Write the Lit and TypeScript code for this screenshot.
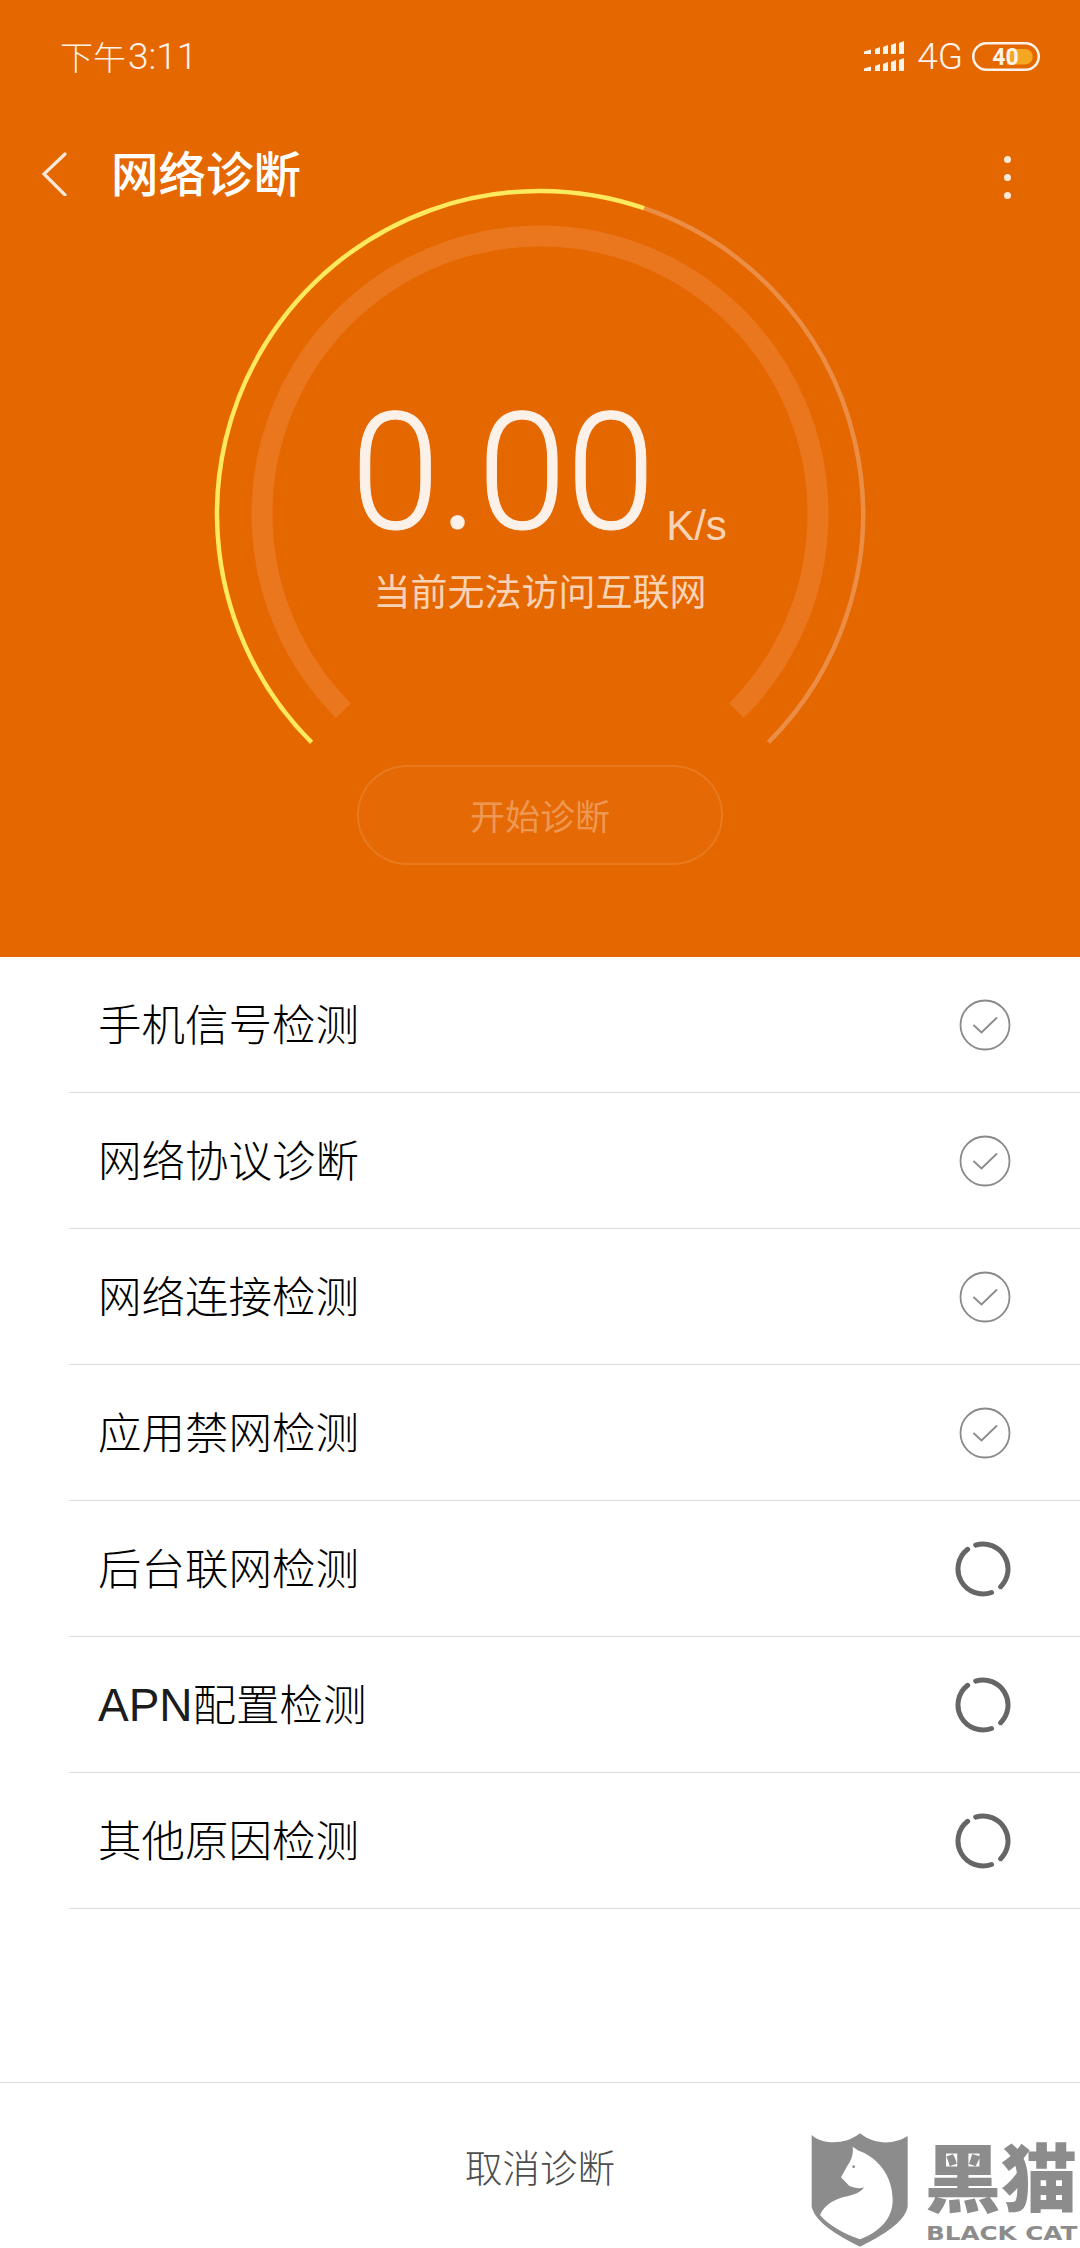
import { LitElement, html, css, svg } from "lit";
import { customElement } from "lit/decorators.js";

type Status = "done" | "busy";
const rows: { latin?: string; label: string; status: Status }[] = [
  { label: "手机信号检测", status: "done" },
  { label: "网络协议诊断", status: "done" },
  { label: "网络连接检测", status: "done" },
  { label: "应用禁网检测", status: "done" },
  { label: "后台联网检测", status: "busy" },
  { latin: "APN", label: "配置检测", status: "busy" },
  { label: "其他原因检测", status: "busy" },
];

// angle in degrees, clockwise from 12 o'clock
function polar(cx: number, cy: number, r: number, deg: number) {
  const a = (deg * Math.PI) / 180;
  return `${(cx + r * Math.sin(a)).toFixed(2)} ${(cy - r * Math.cos(a)).toFixed(2)}`;
}

function arc(cx: number, cy: number, r: number, from: number, to: number) {
  const large = to - from > 180 ? 1 : 0;
  return `M${polar(cx, cy, r, from)} A${r} ${r} 0 ${large} 1 ${polar(cx, cy, r, to)}`;
}

const signalBars = [0, 1, 2, 3, 4].map((i) => {
  const x = i * 8 + (i === 0 ? 0 : 3);
  const w = i === 0 ? 7 : 5;
  const rise = [4.5, 7, 9, 11, 13][i];
  return { x, w, rise };
});

@customElement("app-root")
export class AppRoot extends LitElement {
  static styles = css`
    :host {
      display: block;
      width: 1080px;
      height: 2248px;
      background: #fff;
      font-family: "Noto Sans CJK SC", "Noto Sans", sans-serif;
    }
    .page {
      position: relative;
      display: flex;
      flex-direction: column;
      width: 1080px;
      height: 2248px;
      overflow: hidden;
    }
    .top {
      display: flex;
      flex-direction: column;
      align-items: center;
      height: 957px;
      flex: none;
      background: #e56700;
      color: #fff;
    }
    .status {
      align-self: stretch;
      display: flex;
      align-items: center;
      justify-content: space-between;
      height: 112px;
      padding: 0 40px 0 60px;
    }
    .time {
      display: flex;
      align-items: center;
      color: #fdf3ea;
      font-size: 33px;
      font-weight: 300;
    }
    .clock {
      font-family: Roboto, sans-serif;
      font-size: 37px;
      margin-left: 2px;
    }
    .status-right {
      display: flex;
      align-items: center;
    }
    .net {
      font-family: Roboto, sans-serif;
      font-weight: 300;
      font-size: 37px;
      line-height: 40px;
      margin: 2px 9px 0 12px;
      color: #fdf3ea;
    }
    .nav {
      align-self: stretch;
      display: flex;
      align-items: center;
      height: 76px;
      margin: 22px 0 -22px;
      padding: 4px 69px 0 41px;
      box-sizing: border-box;
    }
    .title {
      flex: 1;
      margin-left: 44px;
      margin-top: -4px;
      font-size: 47.5px;
      font-weight: 500;
      line-height: 76px;
    }
    .dots {
      display: flex;
      flex-direction: column;
      gap: 11px;
      margin-top: 6px;
    }
    .dots i {
      width: 7px;
      height: 7px;
      border-radius: 50%;
      background: #fbe8d8;
    }
    .gauge {
      display: grid;
      width: 660px;
      height: 577px;
      flex: none;
    }
    .gauge > * {
      grid-area: 1 / 1;
    }
    .readout {
      display: flex;
      flex-direction: column;
      align-items: center;
      padding-top: 202px;
    }
    .speed {
      display: flex;
      align-items: flex-end;
      height: 165px;
      margin-left: -2px;
    }
    .value {
      width: 294px;
      font-family: Roboto, sans-serif;
      font-weight: 300;
      font-size: 163px;
      line-height: 165px;
      color: #fcf1e9;
      white-space: nowrap;
      transform: scaleX(0.98);
      transform-origin: left center;
      -webkit-text-stroke: 1px #fcf1e9;
    }
    .unit {
      margin: 0 0 8px 21px;
      font-family: "Liberation Sans", sans-serif;
      font-size: 42px;
      line-height: 42px;
      color: #f9d3b5;
    }
    .hint {
      margin-top: 11px;
      font-size: 37px;
      line-height: 48px;
      font-weight: 400;
      color: #f9d3b5;
    }
    .start {
      display: flex;
      align-items: center;
      justify-content: center;
      box-sizing: border-box;
      width: 366px;
      height: 100px;
      flex: none;
      border: 2.5px solid rgba(255, 255, 255, 0.11);
      border-radius: 50px;
      background: rgba(255, 255, 255, 0.015);
      font-size: 35px;
      padding-bottom: 2px;
      color: rgba(255, 255, 255, 0.32);
    }
    .list {
      flex: 1;
    }
    .row {
      display: flex;
      align-items: center;
      justify-content: space-between;
      box-sizing: border-box;
      height: 136px;
      margin-left: 69px;
      padding: 0 69px 0 29px;
      border-bottom: 1.5px solid #dcdcdc;
      font-size: 43.5px;
      font-weight: 300;
      color: #000;
    }
    .row .label {
      padding-bottom: 4px;
    }
    .latin {
      font-family: "Liberation Sans", sans-serif;
      font-size: 46px;
      font-weight: 400;
      color: #1c1c1c;
    }
    .row svg {
      display: block;
      flex: none;
    }
    .bottom {
      display: flex;
      align-items: center;
      justify-content: center;
      height: 165px;
      flex: none;
      border-top: 1.5px solid #dcdcdc;
      font-size: 37.5px;
      font-weight: 300;
      color: #4d4d4d;
    }
    .mark {
      position: absolute;
      right: 0;
      bottom: 0;
      display: block;
    }
    .mark .cn {
      font-family: "Noto Sans CJK SC", sans-serif;
      font-weight: 900;
      font-size: 222px;
    }
    .mark .en {
      font-family: "DejaVu Sans", sans-serif;
      font-weight: 700;
      font-size: 60px;
    }
  `;

  private renderSignal() {
    return html`<svg width="41" height="32" viewBox="0 0 41 32">
      ${[0, 17].map((top) =>
        signalBars.map(
          (b) => svg`<polygon fill="#fdf3ea"
            points="${b.x},${top + 14} ${b.x},${top + 14 - b.rise + 2} ${b.x + b.w},${top + 14 - b.rise} ${b.x + b.w},${top + 14}"/>`
        )
      )}
    </svg>`;
  }

  private renderBattery() {
    return html`<svg width="68" height="29" viewBox="0 0 68 29">
      <path d="M35 7 H53 A7.5 7.5 0 0 1 53 22.5 H35 Z" fill="#f5a623" />
      <rect x="1.25" y="1.25" width="65.5" height="26.5" rx="13.25" fill="none" stroke="#fdf3ea" stroke-width="2.5" />
      <text x="33.5" y="23" text-anchor="middle" fill="#fdf3ea"
        font-family="Roboto, sans-serif" font-weight="700" font-size="23">40</text>
    </svg>`;
  }

  private renderGauge() {
    const cx = 330;
    const cy = 326;
    return html`<svg width="660" height="577" viewBox="0 0 660 577">
      <path d="${arc(cx, cy, 278, -135, 135)}" fill="none" stroke="#ea761d" stroke-width="21" />
      <path d="${arc(cx, cy, 323, 18.8, 135)}" fill="none" stroke="#ec8d45" stroke-width="4.5" />
      <path d="${arc(cx, cy, 323, -135, 18.8)}" fill="none" stroke="#ffe95c" stroke-width="4.5" />
    </svg>`;
  }

  private renderStatus(status: Status) {
    if (status === "done") {
      return html`<svg width="52" height="52" viewBox="0 0 52 52">
        <circle cx="26" cy="26" r="24.5" fill="none" stroke="#8a8a8a" stroke-width="1.8" />
        <path d="M14.5 26 L22.5 33.5 L38 18.5" fill="none" stroke="#8a8a8a" stroke-width="1.8" />
      </svg>`;
    }
    return html`<svg width="56" height="56" viewBox="0 0 56 56">
      <g fill="none" stroke="#666" stroke-width="5" stroke-linecap="round">
        <path d="${arc(28, 28, 25, -17, 135)}" />
        <path d="${arc(28, 28, 25, 160, 322)}" />
      </g>
    </svg>`;
  }

  private renderMark() {
    return html`<svg class="mark" width="300" height="148" viewBox="0 0 900 444">
      <path fill="#8c8c8c" d="M95 105 C120 130 190 140 240 100 C290 140 350 130 383 108 L383 320 C375 365 310 405 240 440 C170 405 105 365 95 320 Z" />
      <path fill="#fff" d="M218 140 L236 152 C290 170 338 225 338 300 C338 355 300 395 240 418 C190 400 145 375 120 345 C135 310 170 295 205 288 C225 284 245 275 252 262 C235 268 222 262 208 258 L183 232 L198 205 C205 190 222 175 218 140 Z" />
      <circle cx="221" cy="200" r="4" fill="#8c8c8c" />
      <g fill="#8c8c8c">
        <text class="cn" x="434" y="318" textLength="458" lengthAdjust="spacingAndGlyphs">黑猫</text>
        <text class="en" x="438" y="420" textLength="454" lengthAdjust="spacingAndGlyphs">BLACK CAT</text>
      </g>
    </svg>`;
  }

  render() {
    return html`
      <div class="page">
        <section class="top">
          <div class="status">
            <span class="time">下午<span class="clock">3:11</span></span>
            <div class="status-right">
              ${this.renderSignal()}
              <span class="net">4G</span>
              ${this.renderBattery()}
            </div>
          </div>
          <div class="nav">
            <svg width="26" height="44" viewBox="0 0 26 44">
              <path d="M24 2 L3 22 L24 43" fill="none" stroke="#fbe8d8" stroke-width="3.2" stroke-linecap="round" />
            </svg>
            <div class="title">网络诊断</div>
            <div class="dots"><i></i><i></i><i></i></div>
          </div>
          <div class="gauge">
            ${this.renderGauge()}
            <div class="readout">
              <div class="speed">
                <span class="value">0.00</span>
                <span class="unit">K/s</span>
              </div>
              <div class="hint">当前无法访问互联网</div>
            </div>
          </div>
          <div class="start">开始诊断</div>
        </section>
        <section class="list">
          ${rows.map(
            (r) => html`<div class="row">
              <span class="label">${r.latin ? html`<span class="latin">${r.latin}</span>` : ""}${r.label}</span>
              ${this.renderStatus(r.status)}
            </div>`
          )}
        </section>
        <div class="bottom">取消诊断</div>
        ${this.renderMark()}
      </div>
    `;
  }
}
